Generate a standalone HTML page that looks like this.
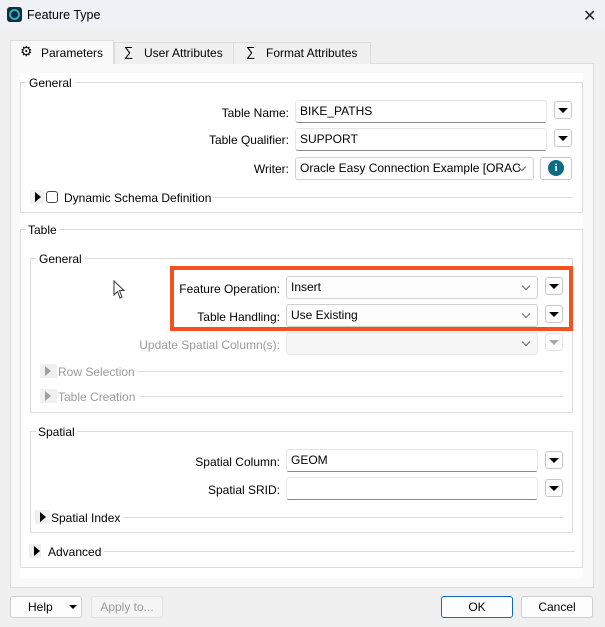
<!DOCTYPE html>
<html><head><meta charset="utf-8"><style>
*{box-sizing:border-box;margin:0;padding:0}
body{width:605px;height:627px;background:#f0f0f0;font-family:"Liberation Sans",sans-serif;font-size:12px;color:#000;position:relative;overflow:hidden}
.a{position:absolute}
.title{left:0;top:0;width:605px;height:28px;background:#eef2f7}
.pane{left:10px;top:63px;width:584px;height:525px;background:#f9f9f9;border:1px solid #dcdcdc}
.white{left:20px;top:73px;width:563px;height:505px;background:#fff}
.grp{border:1px solid #dcdcdc}
.gt{background:#fff;padding:0 3px;white-space:nowrap}
.lbl{text-align:right;white-space:nowrap}
.in{background:#fff;border:1px solid #e5e5e5;border-bottom:1px solid #8a8a8a;border-radius:3px;padding:3px 4px;height:23px;line-height:15px}
.cb{background:#fdfdfd;border:1px solid #d0d0d0;border-radius:3px;padding:3px 4px;height:23px;line-height:15px}
.cb::after{content:"";position:absolute;right:8px;top:6px;width:5px;height:5px;border-right:1px solid #666;border-bottom:1px solid #666;transform:rotate(45deg)}
.db{width:18px;height:18px;border:1px solid #c8c8c8;border-radius:3px;background:#fdfdfd}
.db::after{content:"";position:absolute;left:3px;top:6px;border-left:5px solid transparent;border-right:5px solid transparent;border-top:5px solid #000}
.dis{color:#9a9a9a}
.tri{width:0;height:0;border-top:5px solid transparent;border-bottom:5px solid transparent;border-left:6px solid #000}
.line{height:1px;background:#dcdcdc}
.btn{height:22px;border:1px solid #d0d0d0;border-radius:3px;background:#fdfdfd;text-align:center;line-height:20px}
</style></head><body>
<div class="a title"></div>
<div class="a" style="left:7px;top:7px;width:15px;height:15px;background:#1b2a30;border-radius:3px"></div>
<div class="a" style="left:9px;top:9px;width:11px;height:11px;border-radius:50%;border:2px solid #1fb4d8"></div>
<div class="a" style="left:27px;top:8px;font-size:12.5px">Feature Type</div>
<div class="a" style="left:583px;top:6px;font-size:16px;color:#222">✕</div>

<div class="a pane"></div>
<div class="a" style="left:114px;top:42px;width:120px;height:22px;background:#f0f0f0;border:1px solid #dcdcdc;border-bottom:none"></div>
<div class="a" style="left:233px;top:42px;width:138px;height:22px;background:#f0f0f0;border:1px solid #dcdcdc;border-bottom:none"></div>
<div class="a" style="left:10px;top:40px;width:104px;height:24px;background:#f9f9f9;border:1px solid #dcdcdc;border-bottom:none"></div>
<div class="a" style="left:20px;top:43px;font-size:14px">⚙</div>
<div class="a" style="left:41px;top:46px">Parameters</div>
<div class="a" style="left:124px;top:44px;font-size:13px">∑</div>
<div class="a" style="left:144px;top:46px">User Attributes</div>
<div class="a" style="left:246px;top:44px;font-size:13px">∑</div>
<div class="a" style="left:266px;top:46px">Format Attributes</div>

<div class="a white"></div>
<div class="a grp" style="left:20px;top:82px;width:563px;height:131px"></div>
<div class="a gt" style="left:26px;top:76px">General</div>
<div class="a lbl" style="left:180px;width:109px;top:106px">Table Name:</div>
<div class="a in" style="left:295px;top:100px;width:252px">BIKE_PATHS</div>
<div class="a db" style="left:554px;top:101px"></div>
<div class="a lbl" style="left:180px;width:109px;top:133px">Table Qualifier:</div>
<div class="a in" style="left:295px;top:128px;width:252px">SUPPORT</div>
<div class="a db" style="left:554px;top:129px"></div>
<div class="a lbl" style="left:180px;width:109px;top:162px">Writer:</div>
<div class="a cb" style="left:295px;top:157px;width:239px;white-space:nowrap;overflow:hidden;padding-right:18px">Oracle Easy Connection Example [ORAC</div>
<div class="a" style="left:540px;top:157px;width:32px;height:23px;border:1px solid #c8c8c8;border-radius:3px;background:#fdfdfd"></div>
<div class="a" style="left:548px;top:160px;width:16px;height:16px;border-radius:50%;background:#0e6b86;color:#fff;font-weight:bold;font-size:11px;text-align:center;line-height:16px;font-family:'Liberation Serif',serif">i</div>
<div class="a" style="left:30px;top:190px;width:14px;height:14px;background:#f0f0f0"></div>
<div class="a tri" style="left:35px;top:192px"></div>
<div class="a" style="left:46px;top:191px;width:12px;height:12px;border:1px solid #444;border-radius:3px"></div>
<div class="a" style="left:64px;top:191px">Dynamic Schema Definition</div>
<div class="a line" style="left:213px;top:197px;width:360px"></div>

<div class="a grp" style="left:20px;top:229px;width:563px;height:339px"></div>
<div class="a gt" style="left:26px;top:223px;padding:0 2px">Table</div>
<div class="a grp" style="left:30px;top:258px;width:543px;height:155px"></div>
<div class="a gt" style="left:36px;top:252px">General</div>
<svg class="a" style="left:113px;top:280px" width="13" height="20" viewBox="0 0 13 20"><path d="M1 1 L1 15 L4.5 11.5 L7 18 L9 17 L6.5 10.5 L11 10.5 Z" fill="#fff" stroke="#333" stroke-width="1"/></svg>
<div class="a lbl" style="left:150px;width:130px;top:282px">Feature Operation:</div>
<div class="a cb" style="left:286px;top:276px;width:252px">Insert</div>
<div class="a db" style="left:545px;top:277px"></div>
<div class="a lbl" style="left:150px;width:130px;top:310px">Table Handling:</div>
<div class="a cb" style="left:286px;top:304px;width:252px">Use Existing</div>
<div class="a db" style="left:545px;top:305px"></div>
<div class="a" style="left:170px;top:266px;width:403px;height:65px;border:4px solid #f4511e"></div>
<div class="a lbl dis" style="left:100px;width:180px;top:338px">Update Spatial Column(s):</div>
<div class="a cb" style="left:286px;top:332px;width:252px;background:#f7f7f7;border-color:#e8e8e8"></div>
<div class="a" style="left:545px;top:333px;width:18px;height:18px;background:#fdfdfd;border:1px solid #e4e4e4;border-radius:3px"></div>
<div class="a" style="left:549px;top:340px;border-left:5px solid transparent;border-right:5px solid transparent;border-top:5px solid #a8a8a8"></div>
<div class="a" style="left:40px;top:364px;width:17px;height:14px;background:#f0f0f0"></div>
<div class="a tri" style="left:45px;top:366px;border-left-color:#a0a0a0"></div>
<div class="a dis" style="left:58px;top:365px">Row Selection</div>
<div class="a line" style="left:137px;top:371px;width:426px"></div>
<div class="a" style="left:40px;top:389px;width:17px;height:14px;background:#f0f0f0"></div>
<div class="a tri" style="left:45px;top:391px;border-left-color:#a0a0a0"></div>
<div class="a dis" style="left:58px;top:390px">Table Creation</div>
<div class="a line" style="left:139px;top:396px;width:424px"></div>

<div class="a grp" style="left:30px;top:431px;width:543px;height:102px"></div>
<div class="a gt" style="left:36px;top:425px;padding:0 2px">Spatial</div>
<div class="a lbl" style="left:150px;width:130px;top:455px">Spatial Column:</div>
<div class="a in" style="left:286px;top:449px;width:252px">GEOM</div>
<div class="a db" style="left:545px;top:451px"></div>
<div class="a lbl" style="left:150px;width:130px;top:483px">Spatial SRID:</div>
<div class="a in" style="left:286px;top:477px;width:252px"></div>
<div class="a db" style="left:545px;top:479px"></div>
<div class="a" style="left:35px;top:510px;width:15px;height:14px;background:#f0f0f0"></div>
<div class="a tri" style="left:40px;top:512px"></div>
<div class="a" style="left:51px;top:511px">Spatial Index</div>
<div class="a line" style="left:123px;top:517px;width:440px"></div>

<div class="a" style="left:29px;top:544px;width:12px;height:14px;background:#f0f0f0"></div>
<div class="a tri" style="left:34px;top:546px"></div>
<div class="a" style="left:48px;top:545px">Advanced</div>
<div class="a line" style="left:104px;top:551px;width:471px"></div>

<div class="a btn" style="left:10px;top:596px;width:72px;text-align:left;padding-left:17px">Help</div>
<div class="a" style="left:69px;top:605px;border-left:4px solid transparent;border-right:4px solid transparent;border-top:4px solid #000"></div>
<div class="a btn dis" style="left:91px;top:596px;width:72px;background:#f5f5f5;border-color:#e2e2e2">Apply to...</div>
<div class="a btn" style="left:441px;top:596px;width:72px;border-color:#0f6cbd">OK</div>
<div class="a btn" style="left:521px;top:596px;width:72px">Cancel</div>
</body></html>
